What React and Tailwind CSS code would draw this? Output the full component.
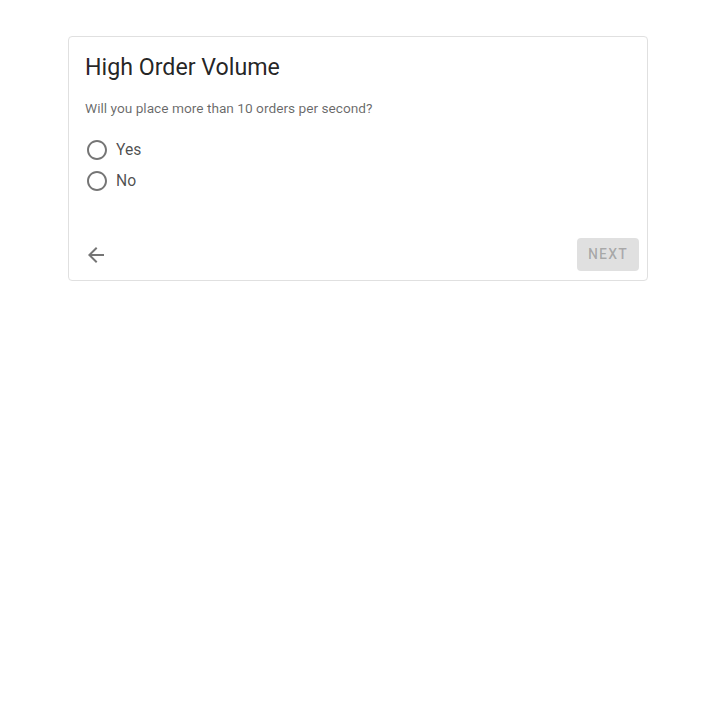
export default function App() {
  const options = ["Yes", "No"];

  return (
    <div className="min-h-screen bg-white pt-[36px] font-['Roboto',sans-serif]">
      <div className="ml-[68px] flex h-[245px] w-[580px] flex-col rounded border border-[#e0e0e0] bg-white">
        <div className="px-4 pt-[15px]">
          <h2 className="text-[23.2px] leading-[30px] text-black/[0.87]">High Order Volume</h2>
          <p className="mt-[16px] text-[13.7px] leading-[20px] text-black/60">
            Will you place more than 10 orders per second?
          </p>
          <div className="mt-[16px] flex flex-col">
            {options.map((opt) => (
              <label key={opt} className="flex h-[31px] items-center">
                <svg viewBox="0 0 24 24" className="h-6 w-6 fill-black/[0.54]">
                  <path d="M12 2C6.48 2 2 6.48 2 12s4.48 10 10 10 10-4.48 10-10S17.52 2 12 2zm0 18c-4.42 0-8-3.58-8-8s3.58-8 8-8 8 3.58 8 8-3.58 8-8 8z" />
                </svg>
                <span className="ml-[7px] text-[15.7px] leading-6 text-black/[0.7]">{opt}</span>
              </label>
            ))}
          </div>
        </div>
        <div className="mt-auto flex items-center justify-between pb-[9px] pl-[15px] pr-[8px]">
          <svg viewBox="0 0 24 24" className="h-6 w-6 fill-black/[0.54]">
            <path d="M20 11H7.83l5.59-5.59L12 4l-8 8 8 8 1.41-1.41L7.83 13H20v-2z" />
          </svg>
          <button
            disabled
            className="flex h-[33px] w-[62px] items-center justify-center rounded bg-black/[0.12] text-[14px] font-medium tracking-[1.25px] text-black/[0.26]"
          >
            NEXT
          </button>
        </div>
      </div>
    </div>
  );
}
